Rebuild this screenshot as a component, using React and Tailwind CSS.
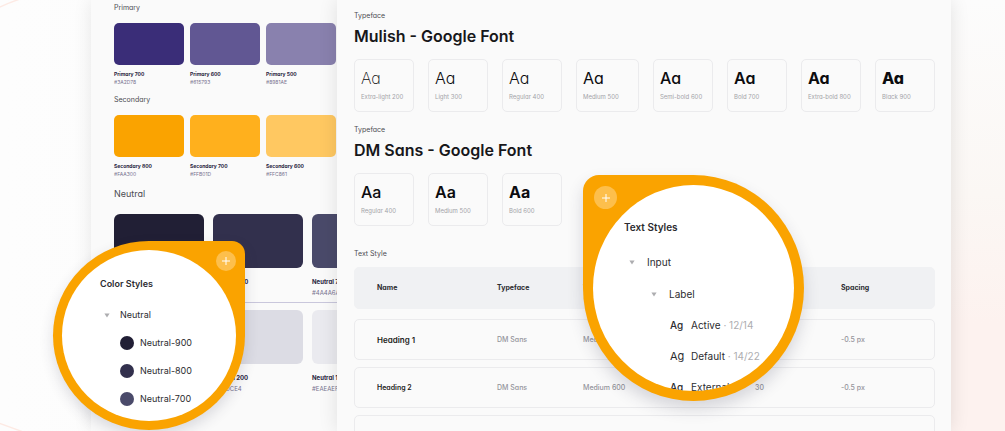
import React from "react";

const primary = [
  { name: "Primary 700", hex: "#3A2D78", bg: "bg-[#3a2d78]" },
  { name: "Primary 600", hex: "#615793", bg: "bg-[#615793]" },
  { name: "Primary 500", hex: "#8981AE", bg: "bg-[#8981ae]" },
];

const secondary = [
  { name: "Secondary 800", hex: "#FAA300", bg: "bg-[#faa300]" },
  { name: "Secondary 700", hex: "#FFB01D", bg: "bg-[#ffb01d]" },
  { name: "Secondary 600", hex: "#FFC861", bg: "bg-[#ffc861]" },
];

const neutralDark = [
  { name: "Neutral 900", hex: "#211F35", bg: "bg-[#211f35]" },
  { name: "Neutral 800", hex: "#32304D", bg: "bg-[#32304d]" },
  { name: "Neutral 700", hex: "#4A4A6A", bg: "bg-[#4a4a6a]" },
];

const neutralLight = [
  { name: "Neutral 300", hex: "#C8C8D4", bg: "bg-[#c8c8d4]" },
  { name: "Neutral 200", hex: "#DCDCE4", bg: "bg-[#dcdce4]" },
  { name: "Neutral 100", hex: "#EAEAEF", bg: "bg-[#eaeaef]" },
];

const mulish = [
  { label: "Extra-light 200", weight: "font-extralight", width: "w-[60px]" },
  { label: "Light 300", weight: "font-light", width: "w-[60px]" },
  { label: "Regular 400", weight: "font-light", width: "w-[60px]" },
  { label: "Medium 500", weight: "font-normal", width: "w-[63px]" },
  { label: "Semi-bold 600", weight: "font-medium", width: "w-[60px]" },
  { label: "Bold 700", weight: "font-semibold", width: "w-[60px]" },
  { label: "Extra-bold 800", weight: "font-bold", width: "w-[60px]" },
  { label: "Black 900", weight: "font-extrabold", width: "w-[60px]" },
];

const dmSans = [
  { label: "Regular 400", weight: "font-medium", width: "w-[60px]" },
  { label: "Medium 500", weight: "font-semibold", width: "w-[60px]" },
  { label: "Bold 600", weight: "font-bold", width: "w-[60px]" },
];

const columns = ["Name", "Typeface", "Weight", "Size", "Line", "Spacing"];

const rows = [
  { name: "Heading 1", size: "text-[8px]", cells: ["DM Sans", "Medium 600", "32", "40", "-0.5 px"] },
  { name: "Heading 2", size: "text-[7px]", cells: ["DM Sans", "Medium 600", "24", "30", "-0.5 px"] },
  { name: "Heading 3", size: "text-[7px]", cells: ["DM Sans", "Medium 600", "20", "26", "-0.5 px"] },
];

const rowGrid = "grid grid-cols-[120fr_86fr_86fr_86fr_86fr_93fr] items-center pl-[22px]";

function SmallSwatches({ title, items }) {
  return (
    <section>
      <h3 className="text-[7px] leading-[10px] text-[#4c4c52]">{title}</h3>
      <ul className="mt-[10px] flex gap-[6px]">
        {items.map((c) => (
          <li key={c.name} className="w-[70px] shrink-0">
            <div className={`h-[42px] rounded-[5px] ${c.bg}`} />
            <p className="mt-[5px] text-[5px] leading-[8px] font-bold text-[#29253f]">{c.name}</p>
            <p className="text-[5px] leading-[8px] text-[#77728f]">{c.hex}</p>
          </li>
        ))}
      </ul>
    </section>
  );
}

function LargeSwatches({ items }) {
  return (
    <ul className="flex gap-[9px]">
      {items.map((c) => (
        <li key={c.name} className="w-[90px] shrink-0">
          <div className={`h-[54px] rounded-[6px] ${c.bg}`} />
          <p className="mt-[8px] text-[6px] leading-[11px] font-bold text-[#29253f]">{c.name}</p>
          <p className="text-[6px] leading-[11px] text-[#77728f]">{c.hex}</p>
        </li>
      ))}
    </ul>
  );
}

function Typeface({ title, items, plain }) {
  return (
    <section>
      <p className="text-[7px] leading-[10px] text-[#4c4c52]">Typeface</p>
      <h2 className="mt-[5px] text-[16px] leading-[20px] font-semibold text-[#17171a]">{title}</h2>
      <ul className="mt-[13px] flex gap-[14px]">
        {items.map((f) => (
          <li
            key={f.label}
            className={`h-[53px] shrink-0 rounded-[5px] border border-[#ebebed] pt-[9px] pl-[6px] ${f.width}`}
          >
            <p
              className={`text-[16px] leading-[18px] text-[#0c0c0f] ${f.weight} ${
                plain ? "[font-feature-settings:normal]" : ""
              }`}
            >
              Aa
            </p>
            <p className="mt-[5px] text-[6px] leading-[10px] whitespace-nowrap text-[#a3a3a8]">{f.label}</p>
          </li>
        ))}
      </ul>
    </section>
  );
}

function Plus({ label, className }) {
  return (
    <button
      type="button"
      aria-label={label}
      className={`absolute flex items-center justify-center rounded-full bg-[#fdbf4c] ${className}`}
    >
      <svg viewBox="0 0 8 8" className="size-[8px]" fill="none" stroke="#fff" strokeWidth="1">
        <path d="M4 0.4v7.2M0.4 4h7.2" strokeLinecap="round" />
      </svg>
    </button>
  );
}

function Caret() {
  return (
    <svg viewBox="0 0 6 5" className="w-[6px] h-[5px] shrink-0" fill="#adadb0">
      <path d="M0.4 0.5h5.2L3 4.6z" />
    </svg>
  );
}

function ColorLens() {
  return (
    <aside className="absolute top-[241px] left-[53px] h-[189px] w-[192px] rounded-[50%] rounded-tr-[13px] bg-[#faa300] px-[9px] py-[9px] shadow-[0_6px_14px_rgba(50,48,77,0.16)] [font-feature-settings:normal]">
      <Plus label="Add color style" className="top-[10px] right-[9px] size-[20px]" />
      <div className="h-full overflow-hidden rounded-[50%] bg-white pt-[27px] pl-[38px] text-[9px] leading-[14px] text-[#2c2c30]">
        <h3 className="font-semibold">Color Styles</h3>
        <div className="mt-[17px] flex items-center gap-[10px] pl-[4px]">
          <Caret />
          Neutral
        </div>
        <ul className="mt-[14px] flex flex-col gap-[14px] pl-[20px]">
          <li className="flex items-center gap-[6px]">
            <span className="size-[14px] rounded-full bg-[#211f35]" />
            Neutral-900
          </li>
          <li className="flex items-center gap-[6px]">
            <span className="size-[14px] rounded-full bg-[#32304d]" />
            Neutral-800
          </li>
          <li className="flex items-center gap-[6px]">
            <span className="size-[14px] rounded-full bg-[#4a4a6a]" />
            Neutral-700
          </li>
        </ul>
      </div>
    </aside>
  );
}

function TextLens() {
  const items = [
    { name: "Active", size: "12/14", ag: "text-[10px] font-medium" },
    { name: "Default", size: "14/22", ag: "text-[11px]" },
    { name: "External", size: "12/14", ag: "text-[10px] font-medium" },
  ];
  return (
    <aside className="absolute top-[175px] left-[583px] h-[226px] w-[221px] rounded-[50%] rounded-tl-[16px] bg-[#faa300] p-[10px] shadow-[0_8px_16px_rgba(50,48,77,0.18)] [font-feature-settings:normal]">
      <Plus label="Add text style" className="top-[11px] left-[11px] size-[23px]" />
      <div className="h-full overflow-hidden rounded-[50%] bg-white pt-[34px] pl-[31px] text-[10px] leading-[16px] text-[#2c2c30]">
        <h3 className="font-semibold">Text Styles</h3>
        <div className="mt-[19px] flex items-center gap-[12px] pl-[5px]">
          <Caret />
          Input
        </div>
        <div className="mt-[16px] flex items-center gap-[12px] pl-[27px]">
          <Caret />
          Label
        </div>
        <ul className="mt-[15px] flex flex-col gap-[15px] pl-[46px]">
          {items.map((t) => (
            <li key={t.name} className="flex items-center whitespace-nowrap">
              <span className={`w-[21px] ${t.ag}`}>Ag</span>
              <span>
                {t.name} <span className="text-[#adadb0]">· {t.size}</span>
              </span>
            </li>
          ))}
        </ul>
      </div>
    </aside>
  );
}

export default function App() {
  return (
    <main className="relative flex h-screen overflow-hidden bg-[linear-gradient(90deg,#fdfdfd_0%,#fbfbfb_50%,#fcf9f7_100%)] pr-[54px] pl-[91px] font-['Inter','Liberation_Sans',sans-serif] [font-feature-settings:'cv11']">
      <svg className="absolute inset-y-0 left-0 h-full w-[60px]" viewBox="0 0 60 431" preserveAspectRatio="none" fill="none" stroke="#fdeae4">
        <path d="M-4 9Q8 3 20 -1M-4 422Q10 427 26 433" strokeWidth="1.4" />
      </svg>
      <div className="absolute inset-y-0 right-0 w-[54px] bg-[linear-gradient(180deg,#fcfcfc_0%,#fbf7f4_45%,#fdf2ef_75%,#fdf2ef_100%)]" />

      <section className="relative w-[246px] shrink-0 overflow-clip bg-[#fafafa] pt-[3px] pl-[23px] shadow-[0_0_18px_rgba(0,0,0,0.09)]">
        <SmallSwatches title="Primary" items={primary} />
        <div className="mt-[9px]">
          <SmallSwatches title="Secondary" items={secondary} />
        </div>
        <h3 className="mt-[9px] text-[9px] leading-[14px] text-[#4c4c52]">Neutral</h3>
        <div className="mt-[13px]">
          <LargeSwatches items={neutralDark} />
        </div>
        <hr className="mt-[4px] mb-[7px] border-t border-[#c9c7dc]" />
        <LargeSwatches items={neutralLight} />
      </section>

      <section className="relative min-w-0 flex-1 bg-[#fafafa] pt-[11px] pr-[16px] pl-[17px] shadow-[0_0_18px_rgba(0,0,0,0.11)]">
        <Typeface title="Mulish - Google Font" items={mulish} />
        <div className="mt-[13px]">
          <Typeface title="DM Sans - Google Font" items={dmSans} plain />
        </div>
        <h3 className="mt-[23px] text-[7px] leading-[10px] text-[#4c4c52]">Text Style</h3>
        <table className="mt-[8px] block text-left text-[7px] leading-[10px]">
          <thead className="block">
            <tr className={`h-[42px] rounded-[5px] border border-[#f0f1f3] bg-[#f0f1f3] ${rowGrid}`}>
              {columns.map((c) => (
                <th key={c} scope="col" className="font-bold text-[#2c2c30]">
                  {c}
                </th>
              ))}
            </tr>
          </thead>
          <tbody className="mt-[10px] flex flex-col gap-[7px]">
            {rows.map((r) => (
              <tr key={r.name} className={`h-[41px] rounded-[5px] border border-[#ebebed] ${rowGrid}`}>
                <th scope="row" className={`font-semibold text-[#1c1c20] ${r.size}`}>
                  {r.name}
                </th>
                {r.cells.map((v, i) => (
                  <td key={i} className="font-medium text-[#94949a]">
                    {v}
                  </td>
                ))}
              </tr>
            ))}
          </tbody>
        </table>
      </section>

      <ColorLens />
      <TextLens />
    </main>
  );
}
